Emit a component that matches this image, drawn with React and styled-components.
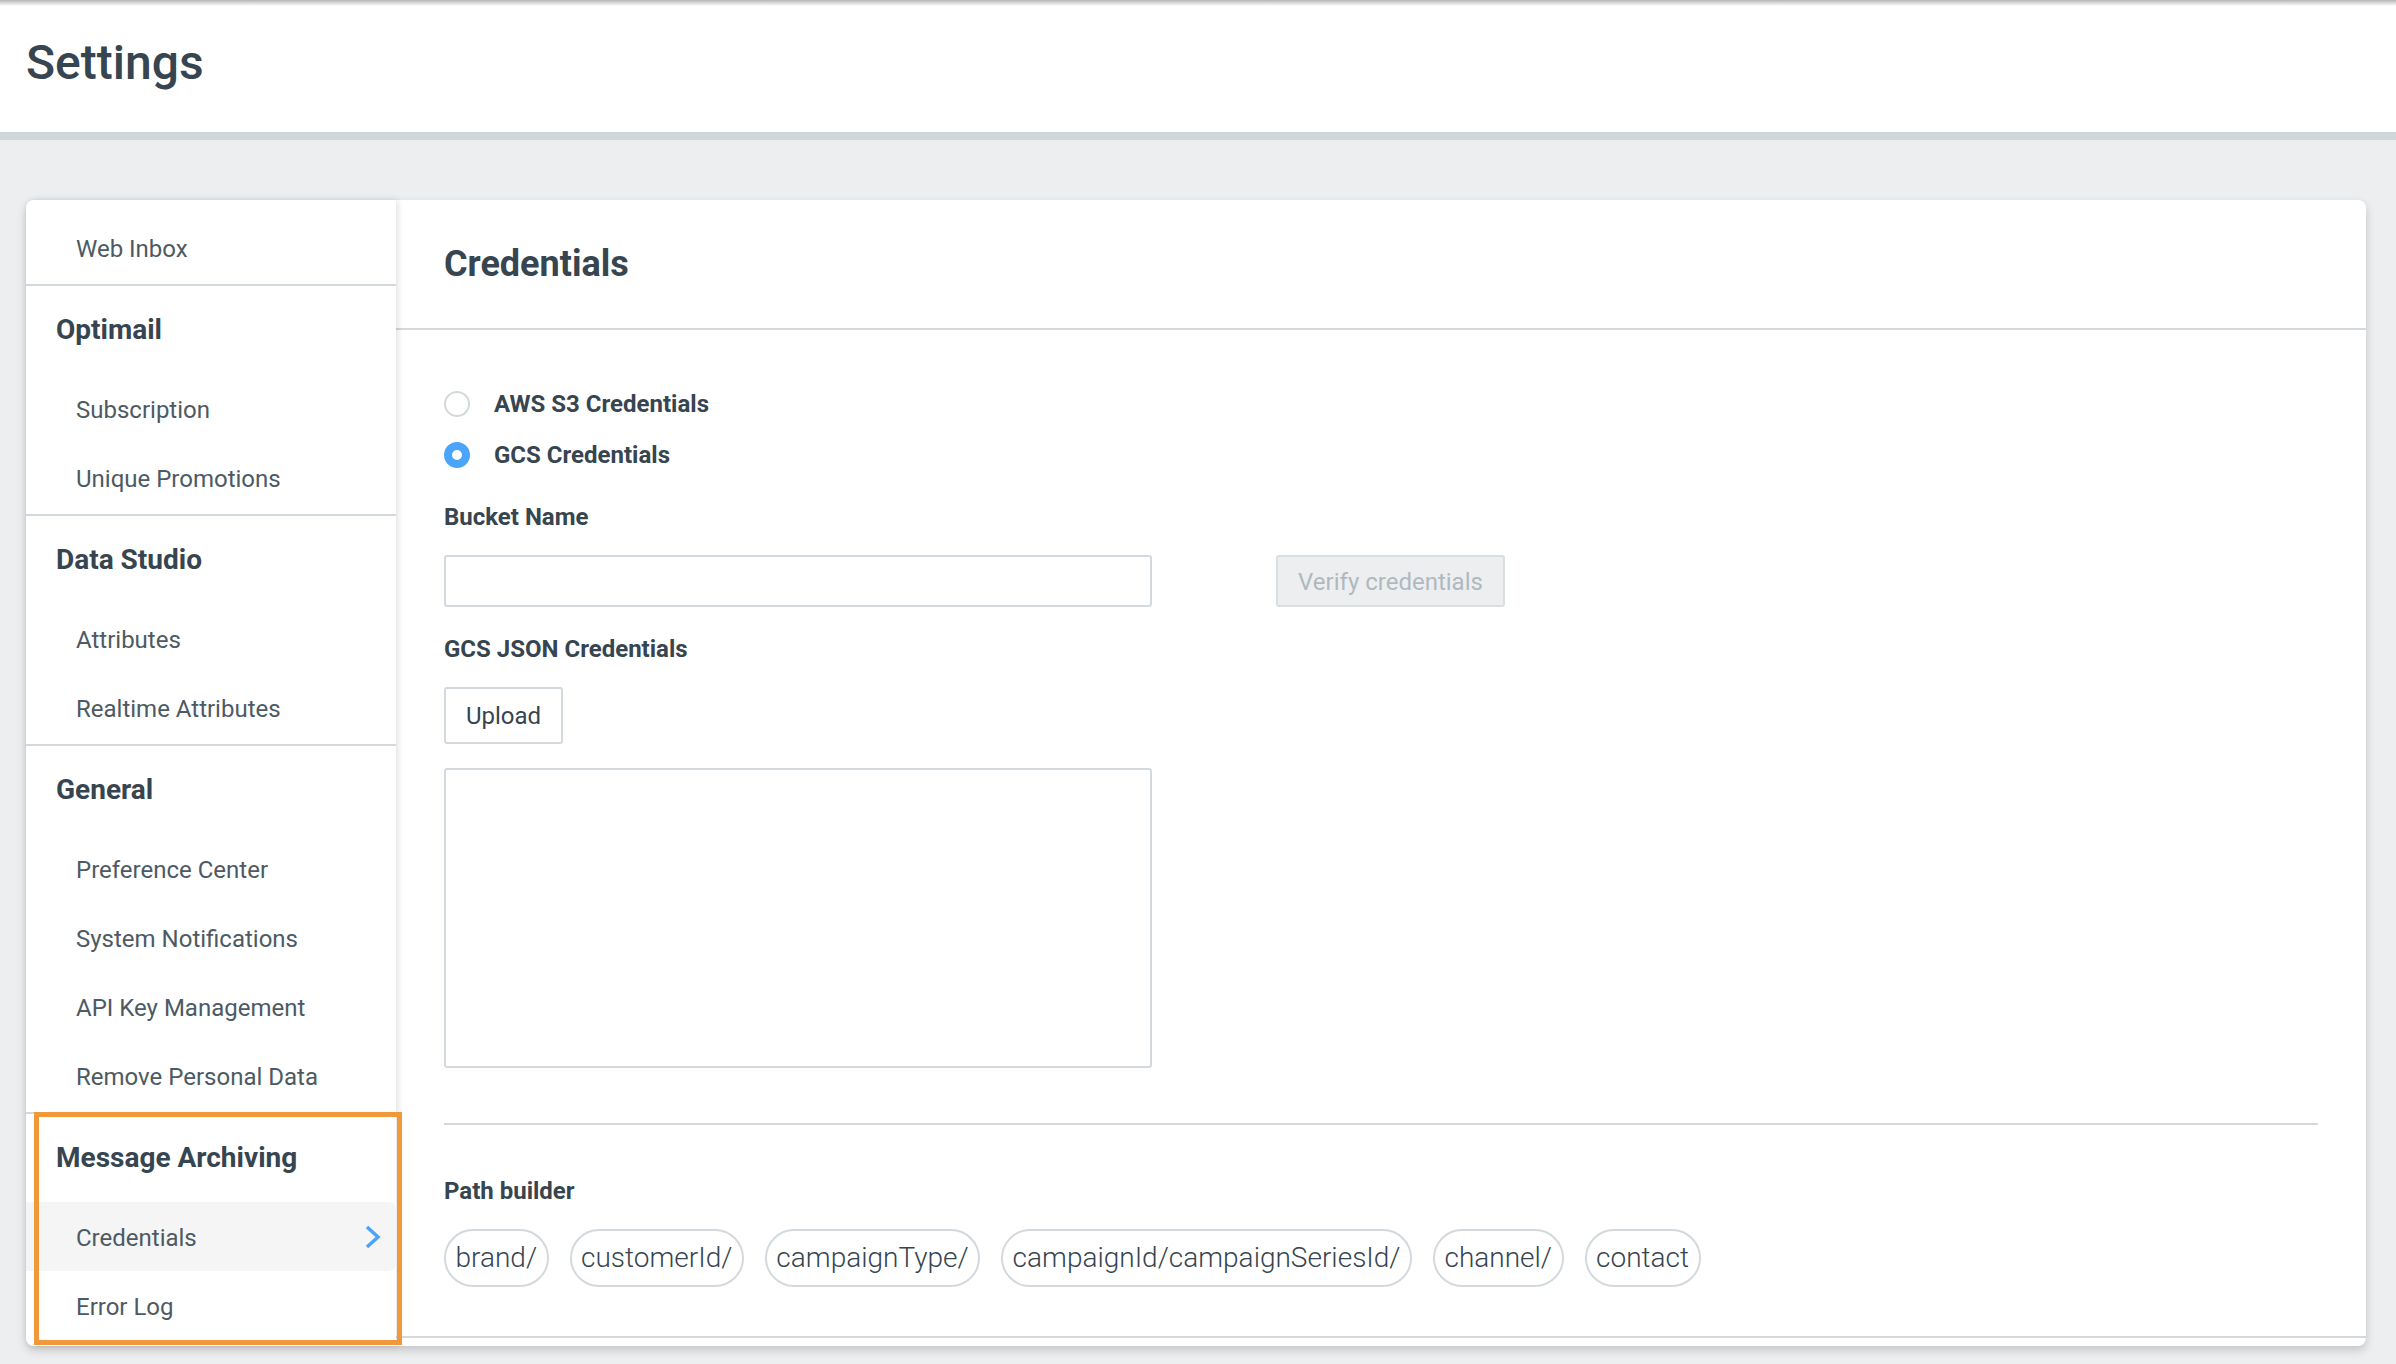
import styled, { createGlobalStyle } from "styled-components";

const GlobalStyle = createGlobalStyle`
* { box-sizing: border-box; }
html, body { margin: 0; padding: 0; background: #edeef0; }
body { font-family: Roboto, "Liberation Sans", sans-serif; color: #36454f; }
`
const Page = styled.div`
min-height: 1364px;
background: #edeef0;
`
const Header = styled.header`
height: 140px;
padding: 33px 26px 0;
background: linear-gradient(#b4b6b8, #fff 6px);
border-bottom: 8px solid #cfd7db;
`
const PageTitle = styled.h1`
margin: 0;
font-size: 48px;
line-height: 60px;
font-weight: 500;
color: #36454f;
`
const Card = styled.div`
display: flex;
width: 2340px;
height: 1146px;
margin: 60px 0 0 26px;
background: #fff;
border-radius: 8px;
box-shadow: 0 4px 10px rgba(0, 0, 0, 0.18);
`
const Sidebar = styled.nav`
position: relative;
z-index: 1;
flex: 0 0 370px;
padding-top: 13px;
background: #fff;
border-radius: 8px 0 0 8px;
box-shadow: 2px 0 6px rgba(0, 0, 0, 0.12);
`
const Section = styled.div`
position: relative;
padding-bottom: 2px;
& + & {
    border-top: 2px solid #d3d9dd;
}
`
const SectionTitle = styled.h3`
margin: 0;
padding-left: 30px;
height: 88px;
line-height: 88px;
font-size: 28px;
font-weight: 700;
color: #36454f;
`
const Item = styled.div`
position: relative;
height: 69px;
line-height: 72px;
padding-left: 50px;
font-size: 24px;
color: #4d5a63;
background: ${p => (p.$active ? "#f5f5f5" : "transparent")};
border-radius: ${p => (p.$active ? "0 8px 8px 0" : "0")};
`
const Chevron = styled.svg`
position: absolute;
top: 23px;
right: 15px;
width: 17px;
height: 24px;
`
const Highlight = styled.div`
position: absolute;
inset: -2px -6px -3px 8px;
border: 5px solid #f0983a;
pointer-events: none;
`
const Main = styled.main`
flex: 1;
display: flex;
flex-direction: column;
min-width: 0;
`
const MainHeader = styled.div`
height: 130px;
padding-left: 48px;
border-bottom: 2px solid #d3d9dd;
`
const MainTitle = styled.h2`
margin: 0;
line-height: 128px;
font-size: 36px;
font-weight: 700;
color: #36454f;
`
const Body = styled.div`
flex: 1;
padding: 48px 48px 0 48px;
`
const RadioRow = styled.label`
display: flex;
align-items: center;
gap: 24px;
height: 51px;
font-size: 24px;
font-weight: 700;
color: #36454f;
`
const Radio = styled.span`
flex: none;
width: 26px;
height: 26px;
border-radius: 50%;
background: #fff;
border: ${p => (p.$checked ? "8px solid #4aa5fa" : "2px solid #d3d9dd")};
`
const FieldLabel = styled.div`
height: 28px;
line-height: 28px;
margin: ${p => p.$top}px 0 ${p => p.$bottom}px;
font-size: 24px;
font-weight: 700;
color: #36454f;
`
const InputRow = styled.div`
display: flex;
align-items: center;
gap: 124px;
`
const TextInput = styled.input`
display: block;
width: 708px;
height: 52px;
background: #fff;
border: 2px solid #d3d9dd;
border-radius: 3px;
outline: none;
`
const VerifyButton = styled.button`
width: 229px;
height: 52px;
padding: 2px 0 0;
background: #edeef0;
border: 2px solid #d9dee1;
border-radius: 3px;
font-family: inherit;
font-size: 24px;
color: #aeb9c0;
`
const UploadButton = styled.button`
display: block;
width: 119px;
height: 57px;
padding: 0;
background: #fff;
border: 2px solid #d3d9dd;
border-radius: 3px;
font-family: inherit;
font-size: 24px;
color: #36454f;
`
const JsonArea = styled.textarea`
display: block;
width: 708px;
height: 300px;
margin-top: 24px;
background: #fff;
border: 2px solid #d3d9dd;
border-radius: 3px;
outline: none;
resize: none;
`
const Divider = styled.hr`
height: 2px;
margin: 55px 0 0;
border: none;
background: #d3d9dd;
`
const Pills = styled.div`
display: flex;
gap: 21px;
`
const Pill = styled.span`
height: 58px;
line-height: 54px;
padding: 0 9.5px;
border: 2px solid #d3d9dd;
border-radius: 29px;
font-size: 28px;
font-weight: 300;
color: #36454f;
`
const MainFooter = styled.div`
height: 10px;
border-top: 2px solid #d3d9dd;
`

const sections = [
    { title: "Optimail", items: ["Subscription", "Unique Promotions"] },
    { title: "Data Studio", items: ["Attributes", "Realtime Attributes"] },
    { title: "General", items: ["Preference Center", "System Notifications", "API Key Management", "Remove Personal Data"] },
]
const pathParts = ["brand/", "customerId/", "campaignType/", "campaignId/campaignSeriesId/", "channel/", "contact"]

const App = () => {
    return (
        <Page>
            <GlobalStyle />
            <Header>
                <PageTitle>Settings</PageTitle>
            </Header>
            <Card>
                <Sidebar>
                    <Section>
                        <Item>Web Inbox</Item>
                    </Section>
                    {sections.map(it => (
                        <Section key={it.title}>
                            <SectionTitle>{it.title}</SectionTitle>
                            {it.items.map(name => <Item key={name}>{name}</Item>)}
                        </Section>
                    ))}
                    <Section>
                        <SectionTitle>Message Archiving</SectionTitle>
                        <Item $active>
                            Credentials
                            <Chevron viewBox="0 0 17 24" fill="none">
                                <path d="M3 2l11 10L3 22" stroke="#4aa5fa" strokeWidth="3.5" />
                            </Chevron>
                        </Item>
                        <Item>Error Log</Item>
                        <Highlight />
                    </Section>
                </Sidebar>
                <Main>
                    <MainHeader>
                        <MainTitle>Credentials</MainTitle>
                    </MainHeader>
                    <Body>
                        <RadioRow><Radio />AWS S3 Credentials</RadioRow>
                        <RadioRow><Radio $checked />GCS Credentials</RadioRow>
                        <FieldLabel $top={23} $bottom={24}>Bucket Name</FieldLabel>
                        <InputRow>
                            <TextInput type="text" />
                            <VerifyButton disabled>Verify credentials</VerifyButton>
                        </InputRow>
                        <FieldLabel $top={28} $bottom={24}>GCS JSON Credentials</FieldLabel>
                        <UploadButton>Upload</UploadButton>
                        <JsonArea />
                        <Divider />
                        <FieldLabel $top={52} $bottom={24}>Path builder</FieldLabel>
                        <Pills>
                            {pathParts.map(it => <Pill key={it}>{it}</Pill>)}
                        </Pills>
                    </Body>
                    <MainFooter />
                </Main>
            </Card>
        </Page>
    )
}

export default App;
